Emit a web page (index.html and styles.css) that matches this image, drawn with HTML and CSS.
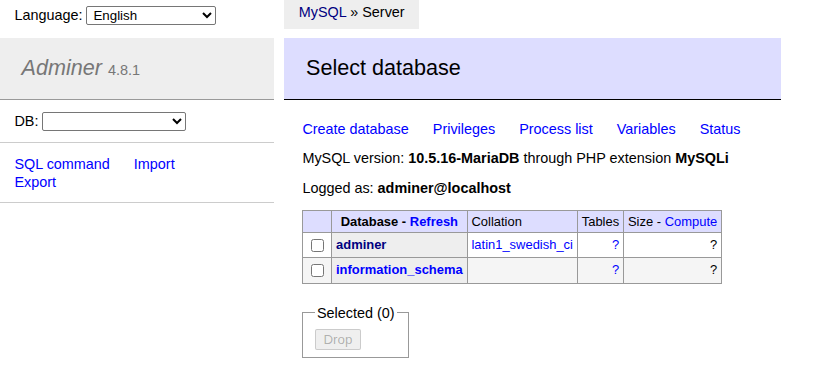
FILE: index.html
```html
<!DOCTYPE html>
<html lang="en">
<head>
<meta charset="utf-8">
<title>Select database - Adminer</title>
<link rel="stylesheet" href="styles.css">
</head>
<body>
<div class="page">
  <div class="side">
    <div class="lang">Language: <select class="sel-lang"><option>English</option></select></div>
    <div class="menu">
      <h1 class="logo"><a href="#" class="brand">Adminer</a> <span class="version">4.8.1</span></h1>
      <p class="dbs">DB: <select class="sel-db"><option></option></select></p>
      <p class="links side-links"><a href="#">SQL command</a> <a href="#">Import</a> <a href="#">Export</a></p>
    </div>
  </div>
  <div class="main">
    <div class="breadcrumb"><a href="#" class="visited">MySQL</a> » Server</div>
    <div class="content">
      <h2 class="title">Select database</h2>
      <p class="links"><a href="#">Create database</a> <a href="#">Privileges</a> <a href="#">Process list</a> <a href="#">Variables</a> <a href="#">Status</a></p>
      <p>MySQL version: <b>10.5.16-MariaDB</b> through PHP extension <b>MySQLi</b></p>
      <p>Logged as: <b>adminer@localhost</b></p>
      <table class="dblist">
        <thead>
          <tr><td></td><th>Database - <a href="#">Refresh</a></th><td>Collation</td><td>Tables</td><td>Size - <a href="#">Compute</a></td></tr>
        </thead>
        <tbody>
          <tr><td><input type="checkbox"></td><th><a href="#" class="visited">adminer</a></th><td><a href="#">latin1_swedish_ci</a></td><td class="num"><a href="#">?</a></td><td class="num">?</td></tr>
          <tr class="odd"><td><input type="checkbox"></td><th><a href="#">information_schema</a></th><td></td><td class="num"><a href="#">?</a></td><td class="num">?</td></tr>
        </tbody>
      </table>
      <div class="footer">
        <fieldset class="selected"><legend>Selected (0)</legend><div><button class="drop" disabled>Drop</button></div></fieldset>
      </div>
    </div>
  </div>
</div>
</body>
</html>
```
FILE: styles.css
```css
body {
  margin: 0;
  color: #000;
  background: #fff;
  font: 14.4px/1.25 "Liberation Sans", Arial, sans-serif;
}
a { color: blue; text-decoration: none; }
a.visited { color: navy; }
.page {
  display: flex;
  align-items: flex-start;
  width: fit-content;
}
.side {
  width: 19em;
  flex: none;
}
.lang {
  box-sizing: border-box;
  height: 38px;
  padding: 3.3px 1em 0;
  line-height: 1.8em;
}
select {
  font: 13.333px "Liberation Sans", Arial, sans-serif;
  color: #000;
  background: #fff;
  border: 1px solid #767676;
  border-radius: 2px;
  height: 19px;
  padding: 0 0 0 2px;
}
.sel-lang { width: 130px; }
.sel-db { width: 144px; }
.logo {
  font-size: 150%;
  font-weight: normal;
  margin: 0;
  padding: 16.8px 1em 17.2px;
  border-bottom: 1px solid #999;
  color: #777;
  background: #eee;
}
.brand { color: #777; font-style: italic; }
.version { color: #777; font-size: 67%; }
.menu p {
  margin: 0;
  padding: .8em 1em;
  border-bottom: 1px solid #ccc;
}
.menu .dbs {
  line-height: 18px;
  padding: 12.5px 1em 10.5px;
}
.menu .side-links {
  padding: 12.3px 1em 10.8px;
}
.links a { white-space: nowrap; margin-right: 20px; }
.main {
  margin-left: 10.8px;
}
.breadcrumb {
  width: fit-content;
  white-space: nowrap;
  background: #eee;
  height: 2em;
  line-height: 1.8em;
  padding: 0 1em;
}
.content {
  padding: 9.2px 20px 20px 18px;
}
.title {
  font-size: 150%;
  font-weight: normal;
  margin: 0 0 20px -18px;
  padding: 16.8px 1em 17.2px;
  border-bottom: 1px solid #000;
  background: #ddf;
}
p { margin: .8em 20px 0 0; }
.dblist {
  margin: 1em 20px 0 0;
  border-collapse: collapse;
  font-size: 90%;
}
.dblist td, .dblist th {
  border: 1px solid #999;
  padding: .2em .3em;
}
.dblist th { background: #eee; text-align: left; }
.dblist thead th { text-align: center; padding: .2em .5em; }
.dblist thead td, .dblist thead th { background: #ddf; }
.dblist .odd td { background: #f5f5f5; }
.dblist .num { text-align: right; }
input[type="checkbox"] {
  vertical-align: middle;
  margin: 3px 3px 3px 4px;
}
.footer {
  border-top: 20px solid #fff;
  padding-bottom: .5em;
}
.selected {
  display: inline;
  vertical-align: top;
  padding: .5em .8em;
  margin: 0 .5em 0 0;
  border: 1px solid #999;
}
.selected legend { padding: 0 2px; }
.drop {
  font: 13.333px "Liberation Sans", Arial, sans-serif;
  color: rgba(16, 16, 16, 0.3);
  background: #efefef;
  border: 1px solid rgba(118, 118, 118, 0.3);
  border-radius: 2px;
  padding: 1px 7.5px;
  height: 21px;
}
```
